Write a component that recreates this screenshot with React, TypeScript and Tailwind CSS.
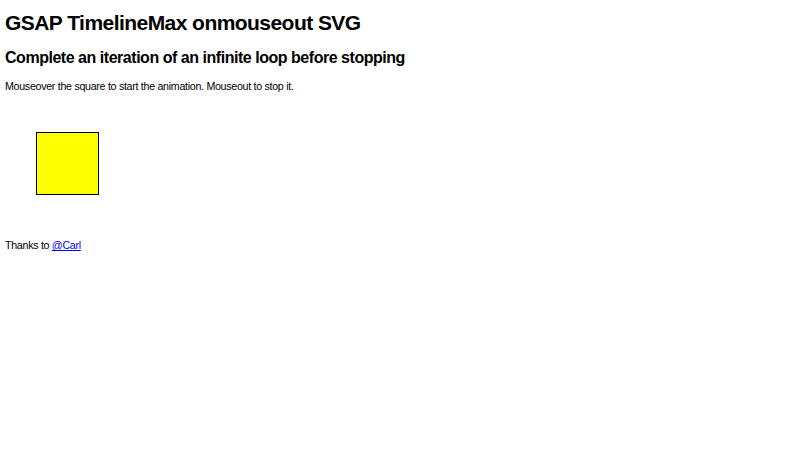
export default function App() {
  return (
    <div className="px-[5px] text-black bg-white min-h-[450px]" style={{ fontFamily: '"Liberation Sans", Arial, sans-serif' }}>
      <h1 className="pt-[11px] text-[21px] leading-[24px] font-bold tracking-[-0.55px]">GSAP TimelineMax onmouseout SVG</h1>
      <h2 className="mt-[14px] text-[16px] leading-[18px] font-bold tracking-[-0.47px]">Complete an iteration of an infinite loop before stopping</h2>
      <p className="mt-[12.5px] text-[10.67px] leading-[12px] tracking-[-0.29px]">Mouseover the square to start the animation. Mouseout to stop it.</p>
      <svg className="block mt-[12px]" width="120" height="120" viewBox="0 0 120 120">
        <rect x="31.5" y="28.5" width="62" height="62" fill="#ffff00" stroke="#000000" strokeWidth="1" />
      </svg>
      <p className="mt-[15.5px] text-[10.67px] leading-[12px] tracking-[-0.29px]">
        Thanks to <a href="#" className="text-[#0000ee] underline">@Carl</a>
      </p>
    </div>
  );
}
